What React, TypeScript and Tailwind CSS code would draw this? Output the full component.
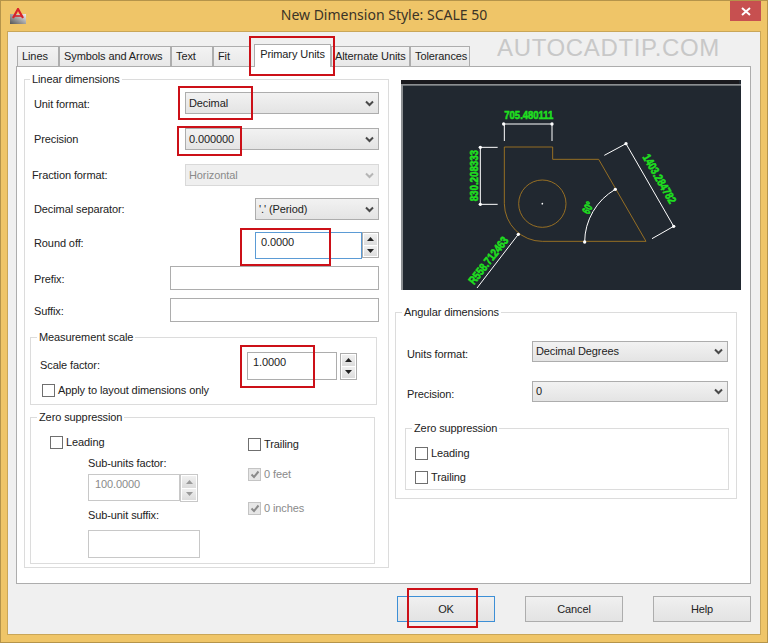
import React from "react";

const Chevron = ({ c = "#4a4a4a" }: { c?: string }) => (
  <svg width="9" height="7" viewBox="0 0 9 7" className="shrink-0">
    <path d="M1 1.5 L4.5 5 L8 1.5" fill="none" stroke={c} strokeWidth="2" />
  </svg>
);

const Select = ({ value, className, disabled }: { value: string; className: string; disabled?: boolean }) => (
  <div
    className={`flex items-center justify-between border pl-[3px] pr-[4px] ${
      disabled
        ? "border-[#d9d9d9] bg-[#efefef] text-[#8a8a8a]"
        : "border-[#adadad] bg-gradient-to-b from-[#f2f2f2] to-[#e4e4e4] text-[#222]"
    } ${className}`}
  >
    <span>{value}</span>
    <Chevron c={disabled ? "#b5b5b5" : "#4a4a4a"} />
  </div>
);

const Spinner = ({ disabled, className }: { disabled?: boolean; className: string }) => (
  <div className={`flex flex-col border p-px gap-px ${disabled ? "border-[#c8c8c8]" : "border-[#adadad]"} ${className}`}>
    {[0, 1].map((i) => (
      <div key={i} className="flex-1 flex items-center justify-center bg-gradient-to-b from-[#f0f0f0] to-[#dcdcdc]">
        <svg width="7" height="4" viewBox="0 0 7 4">
          <path d={i === 0 ? "M3.5 0 L7 4 H0 Z" : "M0 0 H7 L3.5 4 Z"} fill={disabled ? "#9a9a9a" : "#222"} />
        </svg>
      </div>
    ))}
  </div>
);

const Check = ({ label, checked, className = "" }: { label: string; checked?: boolean; className?: string }) => (
  <div className={`flex items-center h-[13px] ${className}`}>
    <div
      className={`w-[13px] h-[13px] shrink-0 border flex items-center justify-center ${
        checked ? "border-[#c4c4c4] bg-[#e6e6e6]" : "border-[#6f6f6f] bg-white"
      }`}
    >
      {checked && (
        <svg width="10" height="9" viewBox="0 0 10 9">
          <path d="M1.5 4.5 L4 7 L8.5 1.5" fill="none" stroke="#8a8a8a" strokeWidth="2" />
        </svg>
      )}
    </div>
    <span className={`ml-[3px] ${checked ? "text-[#8a8a8a]" : ""}`}>{label}</span>
  </div>
);

const Legend = ({ children, className = "" }: { children: React.ReactNode; className?: string }) => (
  <span className={`absolute top-[-8px] bg-white px-[2px] leading-[14px] ${className}`}>{children}</span>
);

const Row = ({ label, children, className = "", labelClass = "" }: { label: string; children: React.ReactNode; className?: string; labelClass?: string }) => (
  <div className={`flex items-center justify-between ${className}`}>
    <span className={labelClass}>{label}</span>
    {children}
  </div>
);

const Red = ({ className }: { className: string }) => (
  <div className={`absolute border-[2.5px] border-[#cc1018] pointer-events-none ${className}`} />
);

const Tab = ({ label, className }: { label: string; className: string }) => (
  <div className={`h-[20px] border border-b-0 border-[#adadad] bg-gradient-to-b from-[#f3f3f3] to-[#e8e8e8] flex items-center pl-[4px] pb-[1px] whitespace-nowrap ${className}`}>
    {label}
  </div>
);

const Btn = ({ label, focus }: { label: string; focus?: boolean }) => (
  <div
    className={`w-[98px] h-[26px] border flex items-center justify-center bg-gradient-to-b from-[#f0f0f0] to-[#e3e3e3] text-[#222] ${
      focus ? "border-[#3d8fd6]" : "border-[#adadad]"
    }`}
  >
    {label}
  </div>
);

const Preview = () => (
  <div className="ml-[6px] mt-px w-[340px] h-[210px]">
    <svg width="340" height="210" viewBox="15 12 1020 630" className="block">
      <rect x="15" y="12" width="1020" height="630" fill="#212830" />
      <rect x="15" y="12" width="1014" height="12" fill="#1a1a1e" />
      <rect x="15" y="24" width="1020" height="5" fill="#8c8f92" />
      <rect x="15" y="24" width="6" height="618" fill="#8c8f92" />
      <path d="M325 213 H470 V250 H608 L750 496 H439 A114 114 0 0 1 325 383 Z" fill="none" stroke="#a87a22" strokeWidth="2.6" />
      <circle cx="439" cy="383" r="71" fill="none" stroke="#a87a22" strokeWidth="2.6" />
      <g fill="none" stroke="#ffffff" strokeWidth="3">
        <path d="M325 195 V144 H468 V195" />
        <path d="M305 214 H253 V385 H305" />
        <path d="M625 238 L690 203 L833 451 L768 488" />
        <path d="M243 636 L367 475" />
        <path d="M566 498 A184 184 0 0 1 658 340" />
      </g>
      <g fill="#ffffff">
        {[[323, 144], [468, 144], [253, 214], [253, 385], [690, 203], [833, 451], [367, 475], [566, 498], [658, 340]].map(([x, y]) => (
          <circle key={`${x}-${y}`} cx={x} cy={y} r="5" />
        ))}
        <circle cx="439" cy="383" r="2.5" />
      </g>
      <g fill="#1fe01f" stroke="#1fe01f" strokeWidth="1.6" fontFamily="'Liberation Sans', sans-serif" fontWeight="700" fontSize="35">
        <text x="325" y="129" textLength="147" lengthAdjust="spacingAndGlyphs">705.480111</text>
        <text transform="translate(245 376) rotate(-90)" textLength="154" lengthAdjust="spacingAndGlyphs">830.208333</text>
        <text transform="translate(739 243) rotate(60)" textLength="165" lengthAdjust="spacingAndGlyphs">1403.284782</text>
        <text transform="translate(578 417) rotate(-62)" textLength="36" lengthAdjust="spacingAndGlyphs">60°</text>
        <text transform="translate(234 628) rotate(-52)" textLength="170" lengthAdjust="spacingAndGlyphs">R558.712463</text>
      </g>
    </svg>
  </div>
);

export default function App() {
  return (
    <div
      className="relative w-[768px] h-[643px] overflow-hidden bg-[#efc568] border border-[#b5944a] text-[11px] leading-[13px] tracking-[-0.1px] text-[#222]"
      style={{ fontFamily: "'Liberation Sans', Arial, sans-serif" }}
    >
      {/* title bar */}
      <div className="relative h-[30px] flex items-center justify-center">
        <svg width="17" height="16" viewBox="0 0 17 16" className="absolute left-[9px] top-[7px]">
          <defs>
            <linearGradient id="g" x1="1" y1="0" x2="0" y2="1">
              <stop offset="0" stopColor="#efefef" />
              <stop offset="1" stopColor="#555" />
            </linearGradient>
          </defs>
          <rect x="0" y="6" width="16" height="10" fill="url(#g)" />
          <path d="M3 10 L8 1 L13 10" fill="none" stroke="#d8232a" strokeWidth="2.2" />
          <path d="M4 8 H12" stroke="#d8232a" strokeWidth="1.6" />
        </svg>
        <span className="text-[14px] tracking-[0px] leading-[18px] text-[#3b3326] mb-[3px]" style={{ fontFamily: "'Noto Sans', sans-serif" }}>
          New Dimension Style: SCALE 50
        </span>
        <div className="absolute right-[6px] top-0 w-[31px] h-[20px] bg-[#c75050] flex items-center justify-center">
          <svg width="10" height="9" viewBox="0 0 10 9">
            <path d="M1 1 L9 8 M9 1 L1 8" stroke="#fff" strokeWidth="2" />
          </svg>
        </div>
      </div>

      {/* client */}
      <div className="ml-[6px] w-[754px] h-[604px] bg-[#f0f0f0] border border-[#c9a658] px-[8px]">
        {/* tabs */}
        <div className="pt-[12px] h-[34px] flex items-end ml-[1px] relative">
          <Tab label="Lines" className="w-[42px]" />
          <Tab label="Symbols and Arrows" className="w-[112px]" />
          <Tab label="Text" className="w-[42px]" />
          <Tab label="Fit" className="w-[38px]" />
          <div className="ml-[3px] -mb-px h-[23px] w-[77px] border border-b-0 border-[#adadad] bg-white flex items-start justify-center pt-[3px] whitespace-nowrap">
            Primary Units
          </div>
          <Tab label="Alternate Units" className="w-[79px] !pl-[3px]" />
          <Tab label="Tolerances" className="w-[60px]" />
        </div>

        {/* panel */}
        <div className="w-[735px] h-[518px] bg-white border border-[#adadad] pl-[7px] pt-[12px] flex">
          {/* left column */}
          <div className="relative w-[365px] h-[489px] border border-[#dcdcdc] pt-[12px] pl-[9px] pr-[9px]">
            <Legend className="left-[5px]">Linear dimensions</Legend>
            <Row label="Unit format:" labelClass="mt-[2px]">
              <Select value="Decimal" className="w-[194px] h-[22px]" />
            </Row>
            <Row label="Precision" className="mt-[14px]">
              <Select value="0.000000" className="w-[194px] h-[22px]" />
            </Row>
            <Row label="Fraction format:" className="mt-[14px]" labelClass="-ml-[2px]">
              <Select value="Horizontal" disabled className="w-[194px] h-[22px]" />
            </Row>
            <Row label="Decimal separator:" className="mt-[12px]">
              <Select value="'.' (Period)" className="w-[124px] h-[22px]" />
            </Row>
            <Row label="Round off:" className="mt-[12px]" labelClass="mb-[4px]">
              <div className="flex w-[124px] h-[27px]">
                <div className="w-[107px] border border-[#5b9bd5] pl-[5px] pt-[3px]">0.0000</div>
                <Spinner className="w-[17px] h-[26px]" />
              </div>
            </Row>
            <Row label="Prefix:" className="mt-[7px]" labelClass="mt-[2px]">
              <div className="w-[209px] h-[24px] border border-[#adadad]" />
            </Row>
            <Row label="Suffix:" className="mt-[8px]" labelClass="mt-[2px]">
              <div className="w-[209px] h-[24px] border border-[#adadad]" />
            </Row>

            <div className="relative -ml-[4px] mt-[15px] w-[347px] h-[68px] border border-[#dcdcdc] pt-[14px] pl-[9px]">
              <Legend className="left-[6px]">Measurement scale</Legend>
              <div className="flex items-center h-[28px]">
                <span className="w-[207px] mb-[2px]">Scale factor:</span>
                <div className="w-[90px] h-[28px] border border-[#adadad] pl-[5px] pt-[3px]">1.0000</div>
                <Spinner className="w-[17px] h-[27px] ml-[3px]" />
              </div>
              <Check label="Apply to layout dimensions only" className="mt-[4px] ml-[2px]" />
            </div>

            <div className="relative -ml-[4px] mt-[12px] w-[345px] h-[147px] border border-[#dcdcdc] flex">
              <Legend className="left-[6px]">Zero suppression</Legend>
              <div className="w-[217px] pt-[18px] pl-[19px]">
                <Check label="Leading" />
                <div className="ml-[38px] mt-[8px]">Sub-units factor:</div>
                <div className="ml-[38px] mt-[4px] flex h-[27px]">
                  <div className="w-[92px] border border-[#c8c8c8] pl-[6px] pt-[3px] text-[#8a8a8a]">100.0000</div>
                  <Spinner disabled className="w-[18px] h-[28px]" />
                </div>
                <div className="ml-[38px] mt-[8px]">Sub-unit suffix:</div>
                <div className="ml-[38px] mt-[8px] w-[112px] h-[28px] border border-[#c8c8c8]" />
              </div>
              <div className="pt-[20px]">
                <Check label="Trailing" />
                <Check label="0 feet" checked className="mt-[17px]" />
                <Check label="0 inches" checked className="mt-[21px]" />
              </div>
            </div>
          </div>

          {/* right column */}
          <div className="ml-[6px] w-[346px]">
            <Preview />
            <div className="relative mt-[22px] w-[342px] h-[187px] border border-[#dcdcdc] pt-[28px] pl-[11px] pr-[8px]">
              <Legend className="left-[6px]">Angular dimensions</Legend>
              <Row label="Units format:" labelClass="mt-[6px]">
                <Select value="Decimal Degrees" className="w-[196px] h-[21px]" />
              </Row>
              <Row label="Precision:" className="mt-[19px]" labelClass="mt-[6px]">
                <Select value="0" className="w-[196px] h-[21px]" />
              </Row>
              <div className="relative -ml-[2px] mt-[26px] w-[324px] h-[62px] border border-[#dcdcdc] pt-[18px] pl-[9px]">
                <Legend className="left-[6px]">Zero suppression</Legend>
                <Check label="Leading" />
                <Check label="Trailing" className="mt-[11px]" />
              </div>
            </div>
          </div>
        </div>

        {/* buttons */}
        <div className="mt-[12px] ml-[381px] flex gap-[30px]">
          <Btn label="OK" focus />
          <Btn label="Cancel" />
          <Btn label="Help" />
        </div>
      </div>

      {/* watermark and annotation overlays */}
      <span className="absolute left-[496px] top-[33px] text-[24px] leading-[28px] tracking-[0.65px] text-[#c8c8c8]">AUTOCADTIP.COM</span>
      <Red className="left-[248px] top-[35px] w-[86px] h-[40px]" />
      <Red className="left-[177px] top-[85px] w-[75px] h-[34px]" />
      <Red className="left-[176px] top-[125px] w-[65px] h-[30px]" />
      <Red className="left-[239px] top-[227px] w-[91px] h-[38px]" />
      <Red className="left-[239px] top-[344px] w-[75px] h-[43px]" />
      <Red className="left-[406px] top-[587px] w-[71px] h-[40px]" />
    </div>
  );
}
